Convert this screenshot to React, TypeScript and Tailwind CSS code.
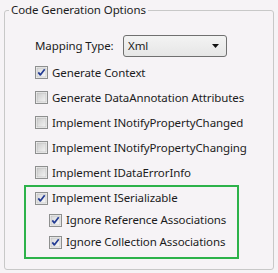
const font = { fontFamily: '"Noto Sans", "Open Sans", sans-serif' };

function CheckBox({ checked }: { checked: boolean }) {
  return (
    <svg width="13" height="13" viewBox="0 0 13 13" className="shrink-0">
      <defs>
        <linearGradient id={checked ? "cbOn" : "cbOff"} x1="0" y1="0" x2="1" y2="1">
          <stop offset="0" stopColor={checked ? "#d8d8da" : "#cbcbcb"} />
          <stop offset="1" stopColor={checked ? "#f8f8f8" : "#f4f4f4"} />
        </linearGradient>
      </defs>
      <rect x="0.5" y="0.5" width="12" height="12" fill="#f4f4f4" stroke="#8e8f8f" />
      <rect x="2" y="2" width="9" height="9" fill={`url(#${checked ? "cbOn" : "cbOff"})`} stroke="#b9b9b9" strokeWidth="0.6" />
      {checked && (
        <path d="M3.3 6.4 L5.3 8.9 L9.7 3.2" fill="none" stroke="#233b93" strokeWidth="1.7" strokeLinejoin="round" />
      )}
    </svg>
  );
}

function Option({ label, checked = false, rowH = "h-[25px]" }: { label: string; checked?: boolean; rowH?: string }) {
  return (
    <div className={`flex items-center gap-[4px] ${rowH}`}>
      <CheckBox checked={checked} />
      <span className="text-[11.5px] tracking-[-0.1px] leading-none text-[#1c1c1c] whitespace-nowrap">{label}</span>
    </div>
  );
}

export default function App() {
  return (
    <div className="w-[278px] h-[273px] bg-[#f6f3f6] pt-[2px] text-[#1c1c1c]" style={font}>
      <fieldset className="ml-[4px] w-[270px] h-[268px] border border-[#c8c8c8] rounded-[3px] pl-[30px] pr-2">
        <legend className="-ml-[26px] px-[2px] text-[11.5px] tracking-[-0.1px] leading-[16px]">
          Code Generation Options
        </legend>

        {/* Mapping type */}
        <div className="flex items-center h-[22px] mt-[17px]">
          <span className="text-[11.5px] tracking-[-0.1px] w-[88px]">Mapping Type:</span>
          <div className="flex items-center justify-between w-[104px] h-[22px] border border-[#707070] rounded-[3px] bg-gradient-to-b from-[#f3f3f3] to-[#e6e6e6] pl-[4px] pr-[7px]">
            <span className="text-[11.5px] tracking-[-0.1px]">Xml</span>
            <svg width="7" height="4" viewBox="0 0 7 4">
              <path d="M0 0 H7 L3.5 4 Z" fill="#111" />
            </svg>
          </div>
        </div>

        <div className="flex flex-col mt-[3px]">
          <Option label="Generate Context" checked />
          <Option label="Generate DataAnnotation Attributes" />
          <Option label="Implement INotifyPropertyChanged" />
          <Option label="Implement INotifyPropertyChanging" />
          <Option label="Implement IDataErrorInfo" />
        </div>

        <div className="-ml-[11px] w-[215px] border-2 border-[#2db24a] pl-[9px] pb-[4px]">
          <Option label="Implement ISerializable" checked rowH="h-[22px]" />
          <div className="pl-[14px]">
            <Option label="Ignore Reference Associations" checked rowH="h-[22px]" />
            <Option label="Ignore Collection Associations" checked rowH="h-[22px]" />
          </div>
        </div>
      </fieldset>
    </div>
  );
}
